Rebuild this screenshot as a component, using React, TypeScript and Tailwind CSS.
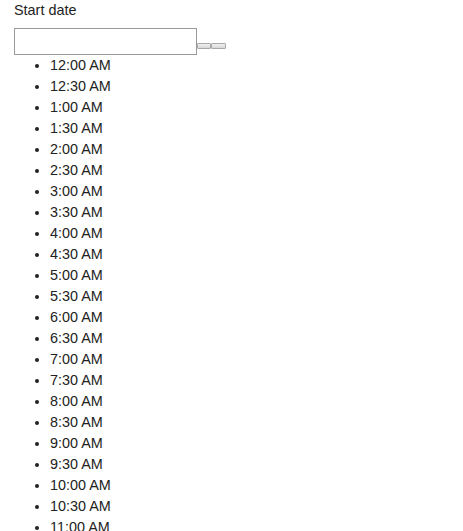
const times: string[] = [];
for (const half of ["AM", "PM"]) {
  for (let h = 0; h < 12; h++) {
    const hour = h === 0 ? 12 : h;
    times.push(`${hour}:00 ${half}`);
    times.push(`${hour}:30 ${half}`);
  }
}

export default function App() {
  return (
    <div className="bg-white px-[14px] font-['Liberation_Sans',Arial,sans-serif] text-[14.4px] leading-[21px] text-[#222]">
      <label htmlFor="start-date" className="block">
        Start date
      </label>
      <div className="mt-[7px] flex items-start">
        <input
          id="start-date"
          type="text"
          className="h-[27px] w-[183px] border border-[#999] bg-white px-1 outline-none"
        />
        <button
          type="button"
          aria-label="Previous"
          className="mt-[15px] h-[6px] w-[14px] rounded-[1px] border border-[#a9a9a9] bg-gradient-to-b from-[#f0f0f0] to-[#d8d8d8]"
        />
        <button
          type="button"
          aria-label="Next"
          className="mt-[15px] h-[6px] w-[15px] rounded-[1px] border border-[#a9a9a9] bg-gradient-to-b from-[#f0f0f0] to-[#d8d8d8]"
        />
      </div>
      <ul className="list-disc pl-9">
        {times.map((t) => (
          <li key={t}>{t}</li>
        ))}
      </ul>
    </div>
  );
}
